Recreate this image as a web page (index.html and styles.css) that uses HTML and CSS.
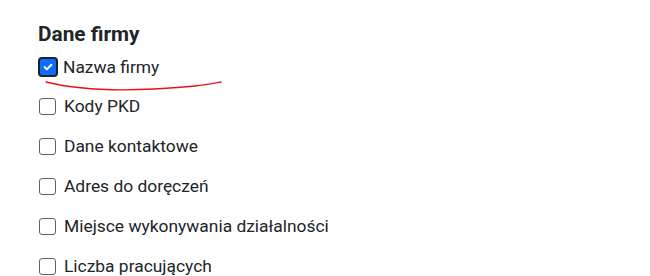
FILE: index.html
```html
<!DOCTYPE html>
<html lang="pl">
<head>
    <meta charset="UTF-8">
    <title>Dane firmy</title>
    <link rel="stylesheet" href="styles.css">
</head>
<body>
    <div class="section">
        <h3>Dane firmy</h3>
        <div class="options">
            <label class="option first">
                <span class="box checked">
                    <svg viewBox="0 0 16 16" width="12" height="12"><path d="M3.5 8.2l3 3 6-6.2" fill="none" stroke="#fff" stroke-width="2.6" stroke-linecap="round" stroke-linejoin="round"/></svg>
                </span>
                Nazwa firmy
                <!-- hand-drawn underline -->
                <svg class="scribble" viewBox="0 0 180 14" width="180" height="14"><path d="M2 2 C 30 9, 70 11, 110 9 S 160 5, 177 2" fill="none" stroke="#e8121c" stroke-width="1.3" stroke-linecap="round"/></svg>
            </label>
            <label class="option"><span class="box"></span>Kody PKD</label>
            <label class="option"><span class="box"></span>Dane kontaktowe</label>
            <label class="option"><span class="box"></span>Adres do doręczeń</label>
            <label class="option"><span class="box"></span>Miejsce wykonywania działalności</label>
            <label class="option"><span class="box"></span>Liczba pracujących</label>
        </div>
    </div>
</body>
</html>
```

FILE: styles.css
```css
* {
    margin: 0;
    padding: 0;
    box-sizing: border-box;
}
body {
    font-family: 'Roboto', 'Liberation Sans', sans-serif;
    color: #212529;
    background: #ffffff;
}
.section {
    padding: 22px 38px 0;
}
h3 {
    font-size: 20.8px;
    font-weight: 700;
    line-height: 24px;
    margin-bottom: 8px;
}
.options {
    display: flex;
    flex-direction: column;
    gap: 14px;
}
.option {
    position: relative;
    display: flex;
    align-items: center;
    gap: 8px;
    font-size: 17.4px;
    line-height: 26px;
}
.option.first {
    margin-bottom: -1px;
}
.box {
    width: 17px;
    height: 17px;
    margin-left: 1px;
    border: 1px solid #5f6368;
    border-radius: 3px;
    display: flex;
    justify-content: center;
    align-items: center;
}
.box.checked {
    width: 20px;
    height: 20px;
    margin-left: 0;
    margin-right: -3px;
    border: 2px solid #1e2228;
    border-radius: 4px;
    background: #0d6efd;
}
.scribble {
    position: absolute;
    left: 6px;
    top: 26px;
}
```
